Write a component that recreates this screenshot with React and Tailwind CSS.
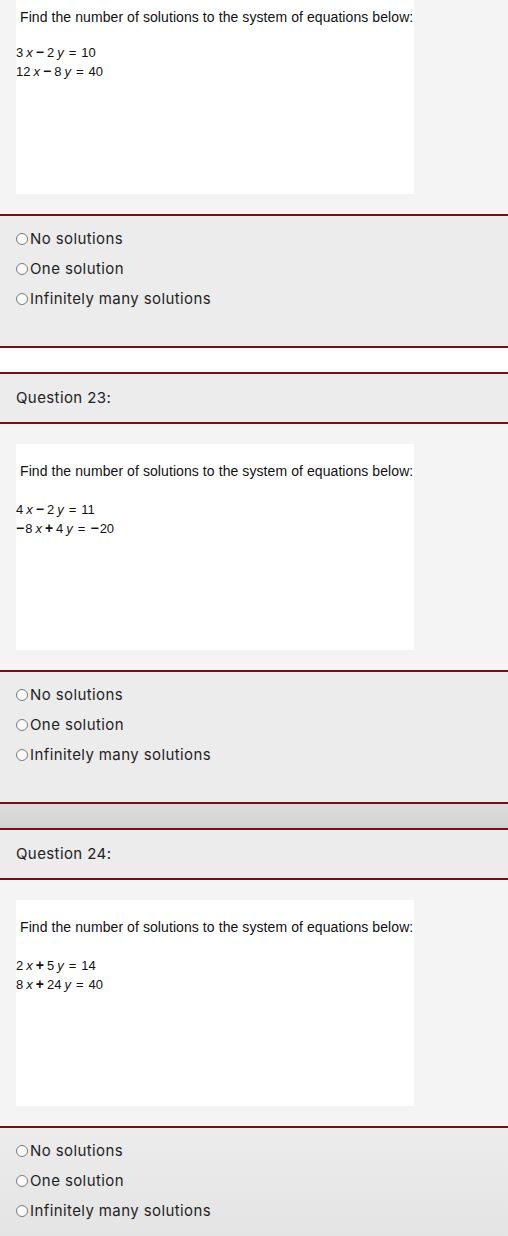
import React from "react";

const Line = () => <div className="h-[2px] bg-[#6e1219]" />;

const Eq = ({ tokens }) => (
  <div className="flex items-center h-[19px] text-[13px] text-[#111]" style={{ fontFamily: '"Liberation Sans", Arial, sans-serif' }}>
    {tokens.map((t, i) => {
      if (t === "x" || t === "y")
        return <i key={i} className="ml-[3px]">{t}</i>;
      if (t === "−" || t === "+") {
        const unary = i === 0 || tokens[i - 1] === "=";
        return (
          <span key={i} className={unary ? "mr-[1px] font-bold text-[14px]" : "mx-[3px] font-bold text-[14px]"}>
            {t}
          </span>
        );
      }
      if (t === "=") return <span key={i} className="mx-[5px]">=</span>;
      return <span key={i}>{t}</span>;
    })}
  </div>
);

const Body = ({ eqs, first }) => (
  <div className={first ? "bg-[#f4f4f4] px-4 pb-5" : "bg-[#f4f4f4] px-4 py-5"}>
    <div className={first ? "bg-white w-[398px] h-[194px] pt-[9px]" : "bg-white w-[398px] h-[206px] pt-[19px]"}>
      <div className="pl-1 text-[14px] leading-4 tracking-[0.08px] text-[#111] whitespace-nowrap" style={{ fontFamily: '"Liberation Sans", Arial, sans-serif' }}>
        Find the number of solutions to the system of equations below:
      </div>
      <div className={first ? "mt-[18px]" : "mt-[21px]"}>
        {eqs.map((e, i) => (
          <Eq key={i} tokens={e} />
        ))}
      </div>
    </div>
  </div>
);

const Options = ({ last }) => (
  <div className={last ? "bg-gradient-to-b from-[#ececec] to-[#e4e4e4] h-[108px] pt-[8px] px-4" : "bg-[#ececec] h-[130px] pt-[8px] px-4"}>
    {["No solutions", "One solution", "Infinitely many solutions"].map((o) => (
      <div key={o} className="h-[30px] flex items-center text-[15px] text-[#1f1f1f] tracking-[0.4px]" style={{ fontFamily: 'Inter, "Open Sans", sans-serif' }}>
        <span className="w-[12px] h-[12px] rounded-full border border-[#7a7a7a] bg-[#fafafa] mr-[2px] shrink-0" />
        {o}
      </div>
    ))}
  </div>
);

const Header = ({ n }) => (
  <div className="bg-[#ececec] h-[48px] flex items-center px-4 pt-[1px] text-[15px] text-[#222] tracking-[0.4px]" style={{ fontFamily: 'Inter, "Open Sans", sans-serif' }}>
    Question {n}:
  </div>
);

export default function App() {
  return (
    <div className="w-[508px] h-[1236px] overflow-hidden bg-[#f4f4f4]">
      <Body first eqs={[["3", "x", "−", "2", "y", "=", "10"], ["12", "x", "−", "8", "y", "=", "40"]]} />
      <Line />
      <Options />
      <Line />
      <div className="h-[24px] bg-white" />
      <Line />
      <Header n={23} />
      <Line />
      <Body eqs={[["4", "x", "−", "2", "y", "=", "11"], ["−", "8", "x", "+", "4", "y", "=", "−", "20"]]} />
      <Line />
      <Options />
      <Line />
      <div className="h-[24px] bg-gradient-to-b from-[#dcdcdc] to-[#d2d2d2]" />
      <Line />
      <Header n={24} />
      <Line />
      <Body eqs={[["2", "x", "+", "5", "y", "=", "14"], ["8", "x", "+", "24", "y", "=", "40"]]} />
      <Line />
      <Options last />
    </div>
  );
}
